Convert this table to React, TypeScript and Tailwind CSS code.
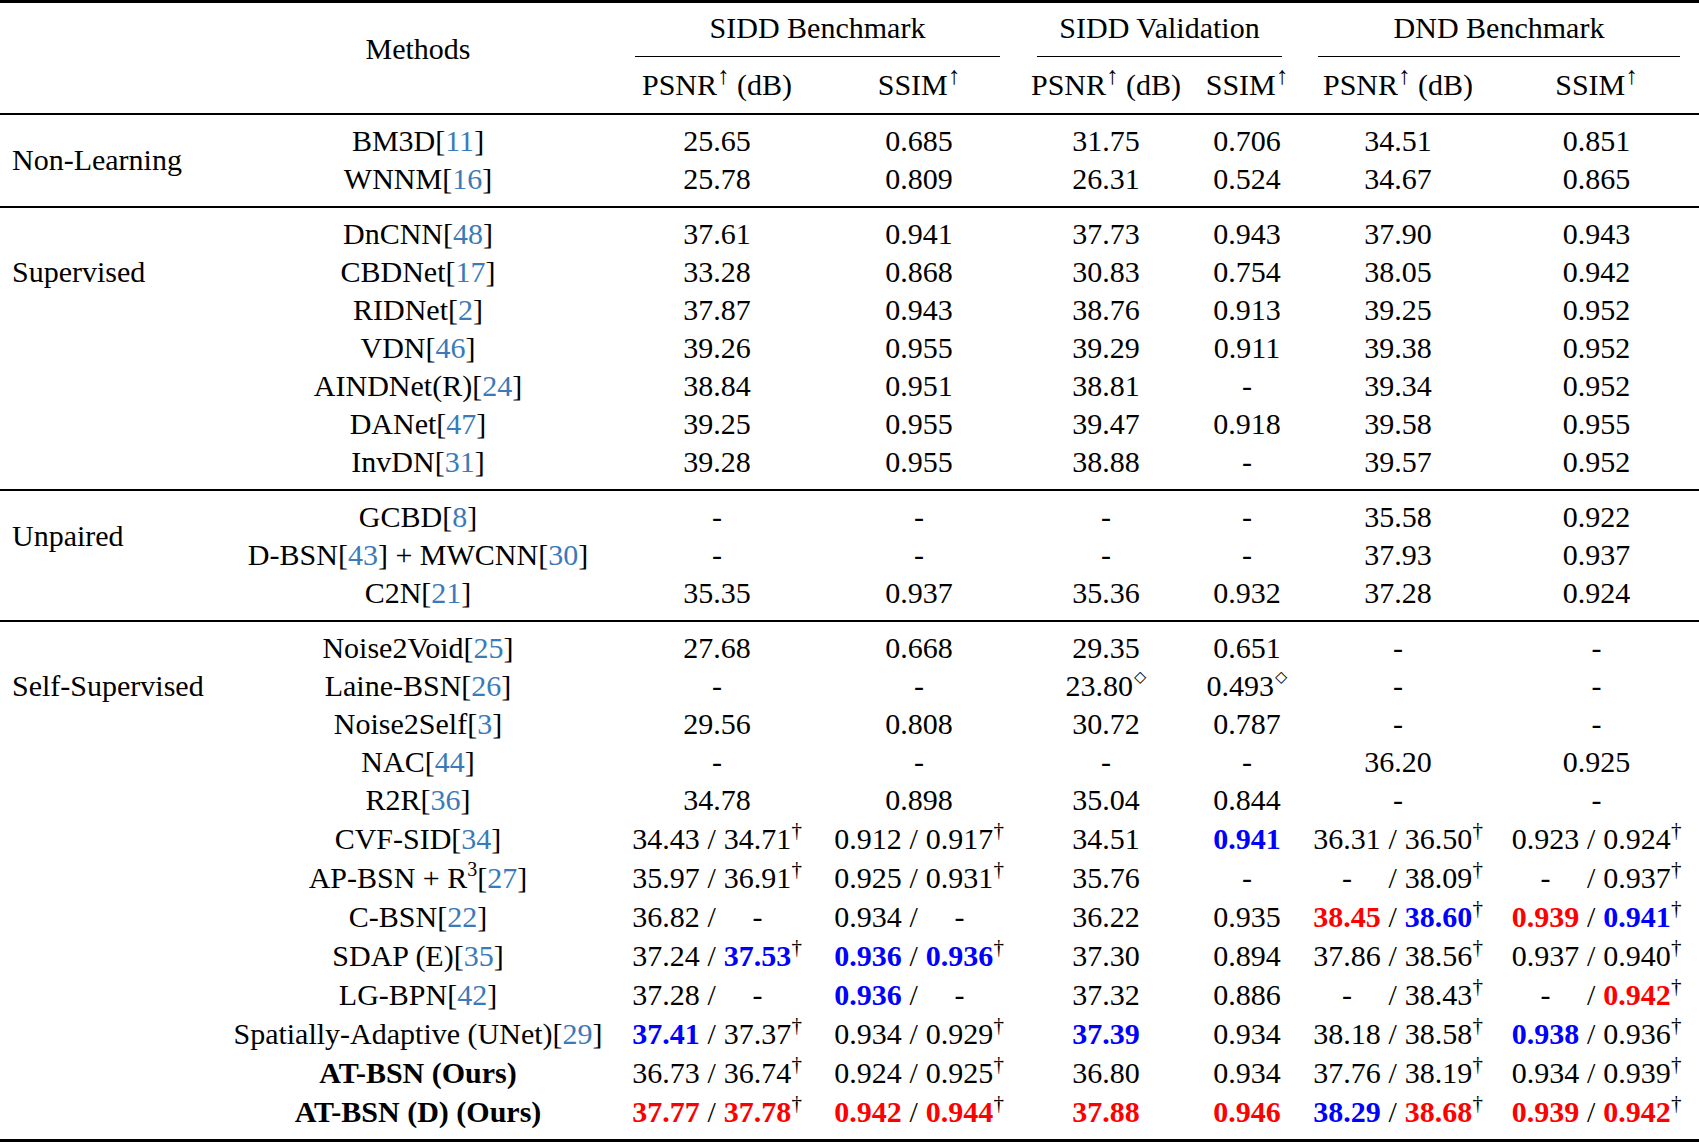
import type { ReactNode } from "react";

type Cell = string | [string, string];
type Row = { m: ReactNode; cells: Cell[] };
type Group = { label: string; span: number; rows: Row[] };

const cite = (n: number) => (
  <>
    [<span className="text-[#3a7ab8]">{n}</span>]
  </>
);

function Dag({ hide }: { hide?: boolean }) {
  return <sup className={`text-[21px] top-[-12px] ${hide ? "invisible" : ""}`}>†</sup>;
}

function Val({ v }: { v: string }) {
  if (v.startsWith("r:")) return <span className="font-bold text-[#ff0000]">{v.slice(2)}</span>;
  if (v.startsWith("b:")) return <span className="font-bold text-[#0000ff]">{v.slice(2)}</span>;
  if (v.endsWith("*"))
    return (
      <>
        {v.slice(0, -1)}
        <sup className="font-['DejaVu_Sans',sans-serif] text-[16px] top-[-14px] ml-[1px]">◇</sup>
      </>
    );
  return <>{v}</>;
}

function Pair({ a, b }: { a: string; b: string }) {
  return (
    <span className="whitespace-nowrap">
      <span className="inline-block w-[68px] text-center">
        <Val v={a} />
      </span>
      {" / "}
      <span className="inline-block w-[68px] text-center">
        <Val v={b} />
      </span>
      <Dag hide={b === "-"} />
    </span>
  );
}

const groups: Group[] = [
  {
    label: "Non-Learning",
    span: 2,
    rows: [
      { m: <>BM3D{cite(11)}</>, cells: ["25.65", "0.685", "31.75", "0.706", "34.51", "0.851"] },
      { m: <>WNNM{cite(16)}</>, cells: ["25.78", "0.809", "26.31", "0.524", "34.67", "0.865"] },
    ],
  },
  {
    label: "Supervised",
    span: 3,
    rows: [
      { m: <>DnCNN{cite(48)}</>, cells: ["37.61", "0.941", "37.73", "0.943", "37.90", "0.943"] },
      { m: <>CBDNet{cite(17)}</>, cells: ["33.28", "0.868", "30.83", "0.754", "38.05", "0.942"] },
      { m: <>RIDNet{cite(2)}</>, cells: ["37.87", "0.943", "38.76", "0.913", "39.25", "0.952"] },
      { m: <>VDN{cite(46)}</>, cells: ["39.26", "0.955", "39.29", "0.911", "39.38", "0.952"] },
      { m: <>AINDNet(R){cite(24)}</>, cells: ["38.84", "0.951", "38.81", "-", "39.34", "0.952"] },
      { m: <>DANet{cite(47)}</>, cells: ["39.25", "0.955", "39.47", "0.918", "39.58", "0.955"] },
      { m: <>InvDN{cite(31)}</>, cells: ["39.28", "0.955", "38.88", "-", "39.57", "0.952"] },
    ],
  },
  {
    label: "Unpaired",
    span: 2,
    rows: [
      { m: <>GCBD{cite(8)}</>, cells: ["-", "-", "-", "-", "35.58", "0.922"] },
      {
        m: (
          <>
            D-BSN{cite(43)} + MWCNN{cite(30)}
          </>
        ),
        cells: ["-", "-", "-", "-", "37.93", "0.937"],
      },
      { m: <>C2N{cite(21)}</>, cells: ["35.35", "0.937", "35.36", "0.932", "37.28", "0.924"] },
    ],
  },
  {
    label: "Self-Supervised",
    span: 3,
    rows: [
      { m: <>Noise2Void{cite(25)}</>, cells: ["27.68", "0.668", "29.35", "0.651", "-", "-"] },
      { m: <>Laine-BSN{cite(26)}</>, cells: ["-", "-", "23.80*", "0.493*", "-", "-"] },
      { m: <>Noise2Self{cite(3)}</>, cells: ["29.56", "0.808", "30.72", "0.787", "-", "-"] },
      { m: <>NAC{cite(44)}</>, cells: ["-", "-", "-", "-", "36.20", "0.925"] },
      { m: <>R2R{cite(36)}</>, cells: ["34.78", "0.898", "35.04", "0.844", "-", "-"] },
      {
        m: <>CVF-SID{cite(34)}</>,
        cells: [["34.43", "34.71"], ["0.912", "0.917"], "34.51", "b:0.941", ["36.31", "36.50"], ["0.923", "0.924"]],
      },
      {
        m: (
          <>
            AP-BSN + R<sup className="text-[20px] top-[-12px]">3</sup>
            {cite(27)}
          </>
        ),
        cells: [["35.97", "36.91"], ["0.925", "0.931"], "35.76", "-", ["-", "38.09"], ["-", "0.937"]],
      },
      {
        m: <>C-BSN{cite(22)}</>,
        cells: [["36.82", "-"], ["0.934", "-"], "36.22", "0.935", ["r:38.45", "b:38.60"], ["r:0.939", "b:0.941"]],
      },
      {
        m: <>SDAP (E){cite(35)}</>,
        cells: [["37.24", "b:37.53"], ["b:0.936", "b:0.936"], "37.30", "0.894", ["37.86", "38.56"], ["0.937", "0.940"]],
      },
      {
        m: <>LG-BPN{cite(42)}</>,
        cells: [["37.28", "-"], ["b:0.936", "-"], "37.32", "0.886", ["-", "38.43"], ["-", "r:0.942"]],
      },
      {
        m: <>Spatially-Adaptive (UNet){cite(29)}</>,
        cells: [["b:37.41", "37.37"], ["0.934", "0.929"], "b:37.39", "0.934", ["38.18", "38.58"], ["b:0.938", "0.936"]],
      },
      {
        m: <span className="font-bold">AT-BSN (Ours)</span>,
        cells: [["36.73", "36.74"], ["0.924", "0.925"], "36.80", "0.934", ["37.76", "38.19"], ["0.934", "0.939"]],
      },
      {
        m: <span className="font-bold">AT-BSN (D) (Ours)</span>,
        cells: [
          ["r:37.77", "r:37.78"],
          ["r:0.942", "r:0.944"],
          "r:37.88",
          "r:0.946",
          ["b:38.29", "r:38.68"],
          ["r:0.939", "r:0.942"],
        ],
      },
    ],
  },
];

const cols = "grid grid-cols-[396px_202px_202px_172px_110px_192px_205px]";
const subCols = "grid grid-cols-[202px_202px_172px_110px_192px_205px]";

function Arrow() {
  return <sup className="text-[25px] top-[-11px]">↑</sup>;
}

export default function App() {
  return (
    <div className="w-[1699px] min-h-[1147px] bg-white text-black font-['Liberation_Serif','Times_New_Roman',serif] text-[30px] leading-[38px]">
      <div className="border-t-[3px] border-b-2 border-black flex">
        <div className="w-[220px]" />
        <div className="w-[396px] text-center pt-[27px]">Methods</div>
        <div className="flex flex-col">
          <div className="flex">
            <div className="w-[404px] pl-[19px] pr-[20px]">
              <div className="pt-[6px] pb-[9px] text-center border-b border-black">SIDD Benchmark</div>
            </div>
            <div className="w-[282px] pl-[17px] pr-[20px]">
              <div className="pt-[6px] pb-[9px] text-center border-b border-black">SIDD Validation</div>
            </div>
            <div className="w-[397px] pl-[16px] pr-[19px]">
              <div className="pt-[6px] pb-[9px] text-center border-b border-black">DND Benchmark</div>
            </div>
          </div>
          <div className={`${subCols} pt-[9px] pb-[9px] text-center whitespace-nowrap`}>
            <div>
              PSNR<Arrow /> (dB)
            </div>
            <div>
              SSIM<Arrow />
            </div>
            <div>
              PSNR<Arrow /> (dB)
            </div>
            <div>
              SSIM<Arrow />
            </div>
            <div>
              PSNR<Arrow /> (dB)
            </div>
            <div>
              SSIM<Arrow />
            </div>
          </div>
        </div>
      </div>

      {groups.map((g, gi) => (
        <div
          key={g.label}
          className={`flex pt-[7px] pb-[8px] border-black ${gi === groups.length - 1 ? "border-b-[3px]" : "border-b-2"}`}
        >
          <div className="w-[220px] pl-[12px]">
            <div className={`flex items-center ${g.span === 2 ? "h-[76px]" : "h-[114px]"}`}>{g.label}</div>
          </div>
          <div className="flex flex-col">
            {g.rows.map((r, ri) => {
              const tall = r.cells.some((c) => Array.isArray(c));
              return (
                <div
                  key={ri}
                  className={`${cols} text-center whitespace-nowrap ${tall ? "h-[39px] leading-[39px]" : "h-[38px]"}`}
                >
                  <div>{r.m}</div>
                  {r.cells.map((c, ci) => (
                    <div key={ci}>{Array.isArray(c) ? <Pair a={c[0]} b={c[1]} /> : <Val v={c} />}</div>
                  ))}
                </div>
              );
            })}
          </div>
        </div>
      ))}
    </div>
  );
}
